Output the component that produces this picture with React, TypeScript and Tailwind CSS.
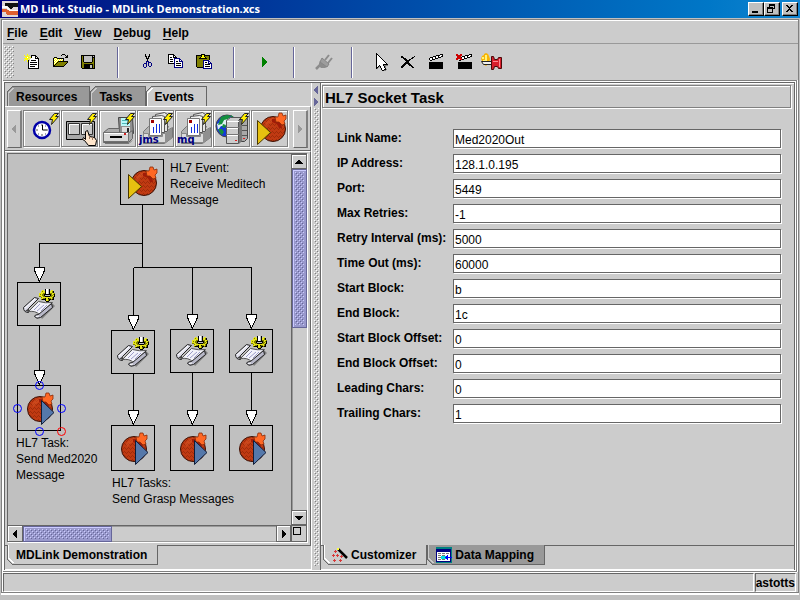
import React from "react";

const FONT = "font-['Liberation_Sans',Arial,sans-serif]";

/* ---------- pixel icons ---------- */

const PALETTE: Record<string, string> = {
  k: "#000000",
  w: "#ffffff",
  y: "#ffff00",
  o: "#808000",
  n: "#000080",
  r: "#cc0000",
  g: "#c0c0c0",
  d: "#808080",
  e: "#e6e61a",
};

function pixelCells(rows: string[]) {
  const cells: React.ReactNode[] = [];
  rows.forEach((row, y) => {
    let x = 0;
    while (x < row.length) {
      const ch = row[x];
      let end = x + 1;
      while (end < row.length && row[end] === ch) end++;
      if (PALETTE[ch]) {
        cells.push(<rect key={`${x}-${y}`} x={x} y={y} width={end - x} height={1} fill={PALETTE[ch]} />);
      }
      x = end;
    }
  });
  return cells;
}

function PixelIcon({ rows, size = 16 }: { rows: string[]; size?: number }) {
  return (
    <svg width={size} height={size} viewBox={`0 0 ${size} ${size}`} shapeRendering="crispEdges" aria-hidden="true">
      {pixelCells(rows)}
    </svg>
  );
}

const NEW_ROWS = [
  "...y............",
  "y..y.y.kkkkk....",
  ".yyyy..kwwwkk...",
  "..ywyyykwwwkwk..",
  "yyyyy..wwwwkkkk.",
  ".yyy.ywwwwwwwwk.",
  "y..yk.wkkkkkwwk.",
  "...ykwwwwwwwwwk.",
  "....kwkkkkkkkwk.",
  "....kwwwwwwwwwk.",
  "....kwkkkkkkkwk.",
  "....kwwwwwwwwwk.",
  "....kwkkkkkwwwk.",
  "....kwwwwwwwwwk.",
  "....kkkkkkkkkkk.",
];
const OPEN_ROWS = [
  "..........kkk...",
  ".........k...k.k",
  "..............kk",
  "..kkk........kkk",
  ".kywykkkkkkk....",
  ".kwywywywywk....",
  ".kywywywywyk....",
  ".kwywykkkkkkkkkk",
  ".kywykoooooooook",
  ".kwykoooooooook.",
  ".kykoooooooook..",
  ".kkoooooooook...",
  ".kkkkkkkkkkk....",
];
const SAVE_ROWS = [
  ".",
  ".kkkkkkkkkkkkkk.",
  ".kokggggggggkgk.",
  ".kokggggggggkkk.",
  ".kokggggggggkok.",
  ".kokggggggggkok.",
  ".kokggggggggkok.",
  ".kokggggggggkok.",
  ".kookkkkkkkkook.",
  ".kooooooooooook.",
  ".kookkkkkkkkkok.",
  ".kookkkkkkggkok.",
  ".kookkkkkkggkok.",
  ".kookkkkkkggkok.",
  "..kkkkkkkkkkkkk.",
];
const CUT_ROWS = [
  ".....k...k",
  ".....k...k",
  ".....kk.kk",
  "......k.k",
  "......kkk",
  ".......k",
  ".......k",
  "......nnn",
  "......n.nnn",
  "....nnn.n..n",
  "...n..n.n..n",
  "...n..n.n..n",
  "...n..n..nn",
  "....nn",
];
const COPY_ROWS = [
  "kkkkkk..........",
  "kwwwwkk.........",
  "kwwwwkwk........",
  "kwkkwkkkk.......",
  "kwwwwwnnnnnn....",
  "kwkkkwnwwwwnn...",
  "kwwwwwnwwwwnwn..",
  "kwkkkwnwkkwnnnn.",
  "kwwwwwnwwwwwwwn.",
  "kkkkkknwkkkkkwn.",
  "......nwwwwwwwn.",
  "......nwkkkkkwn.",
  "......nwwwwwwwn.",
  "......nnnnnnnnn.",
];
const PASTE_ROWS = [
  ".....kkkk.......",
  "kkkkkkyykkkkkk..",
  "kooookyykooook..",
  "koookyyyykoook..",
  "kookkkkkkkkook..",
  "kooooooooooook..",
  "koooooonnnnnn...",
  "koooooonwwwwnn..",
  "koooooonwkkwnwn.",
  "koooooonwwwwnnnn",
  "koooooonwkkkkkwn",
  "koooooonwwwwwwwn",
  "koooooonwkkkkkwn",
  ".kkkkkknwwwwwwwn",
  ".......nnnnnnnnn",
];
const CURSOR_ROWS = [
  "k",
  "kk",
  "kwk",
  "kwwk",
  "kwwwk",
  "kwwwwk",
  "kwwwwwk",
  "kwwwwwwk",
  "kwwwwwwwk",
  "kwwwwwwwwk",
  "kwwwwwwwwwk",
  "kwwwwwwkkkkk",
  "kwwkwwwkdddd",
  "kwkdkwwwkd",
  "kkd.kwwwkd",
  "kd...kwwwk",
  ".....kwwkkd",
  "......kkdd",
].map((r) => "....." + r);
const CROSS_ROWS = [
  "",
  "",
  ".kk...........k",
  ".kkk........kk",
  "...kkk.....kk",
  "....kkk..kk",
  ".....kkkkk",
  "......kkk",
  ".....kkkk",
  "....kkkkkk",
  "...kkk..kkk",
  "..kkk....kkk",
  ".kkk.......kk",
  ".kk.........kk",
];
const CLAP_ROWS = [
  "............kkk",
  "........kkkkwwk",
  ".....kkkwwkwwkk",
  "..kkkwwkwwkkk",
  ".kwwkwwkkk",
  ".kwwkkk",
  "..kk",
  "",
  ".kkkkkkkkkkkkkk",
  ".kkkkkkkkkkkkkk",
  ".kkkkkkkkkkkkkk",
  ".kkkkkkkkkkkkkk",
  ".kkkkkkkkkkkkkk",
  ".kkkkkkkkkkkkkk",
  ".kkkkkkkkkkkkkk",
];
const CLAP_X_ROWS = [
  "rr..rr.......kkk",
  "rrrrrr...kkkkwwk",
  ".rrrr.kkkwwkwwkk",
  ".rrrrkwwkwwkkk",
  "rrrrrrwwkkk",
  "rr..rrkk",
  "...kk",
  "",
  "..kkkkkkkkkkkkkk",
  "..kkkkkkkkkkkkkk",
  "..kkkkkkkkkkkkkk",
  "..kkkkkkkkkkkkkk",
  "..kkkkkkkkkkkkkk",
  "..kkkkkkkkkkkkkk",
  "..kkkkkkkkkkkkkk",
];
const GEAR_ROWS = [
  "......kwwgk.....",
  "...ee.kwwgk.ee..",
  "..eoeekwwgkeeok.",
  "..eeeekwwgkeeok.",
  "eeeeookwwgkooeeo",
  "eoeookkkkkkkoeok",
  "eeeook.....kooek",
  "ooeeookkkkkooeok",
  "..oeeeeeeeeeeok.",
  "..eeookeekooeok.",
  "..okkkkeeokkokk.",
  "......keeok.....",
  ".......kkk......",
];

function PlayIcon() {
  return (
    <svg width="16" height="16" viewBox="0 0 16 16" shapeRendering="crispEdges" aria-hidden="true">
      <path d="M6 3h1v1h1v1h1v1h1v1h1v2h-1v1h-1v1H8v1H7v1H6z" fill="#008000" />
    </svg>
  );
}

function PlugIcon() {
  return (
    <svg width="18" height="16" viewBox="0 0 18 16" aria-hidden="true">
      <path d="M1 15l4-4" stroke="#8c8c8c" strokeWidth="2.5" fill="none" />
      <path d="M5 7l7 6-2 1H6l-2-2V9z" fill="#8c8c8c" />
      <path d="M7 4l7 6-2 3-7-5z" fill="#9d9d9d" stroke="#858585" />
      <path d="M10 6l4-5M13 9l4-5" stroke="#8c8c8c" strokeWidth="2" fill="none" />
    </svg>
  );
}

function PinIcon() {
  return (
    <svg width="22" height="18" viewBox="0 0 22 18" className="shrink-0" aria-hidden="true">
      <path d="M3 1l2-1 2 1 1 2 1 3-1 4-3 3-3-2-1-3-1-2 1-3 2-1z" fill="#f9b400" />
      <path d="M4 2h2v5H4zM1 4h2v2H1zM2 7h4v2H2z" fill="#fff27a" />
      <path d="M.5 8.500h11v3h-9z" fill="#f0f0f0" stroke="#222" />
      <path d="M10.500 3.500h2l1 3h3l1-2h3v11h-3l-1-2h-3l-1 3h-2z" fill="#d81e2c" stroke="#4a0a0a" />
      <path d="M12 8.500h5M18.500 6v8" stroke="#ff8890" fill="none" />
    </svg>
  );
}

/* ---------- swing style textures ---------- */

function Bumps({ id, light, dark }: { id: string; light: string; dark: string }) {
  return (
    <svg className="block h-full w-full" shapeRendering="crispEdges" aria-hidden="true">
      <defs>
        <pattern id={id} width="4" height="4" patternUnits="userSpaceOnUse">
          <rect width="1" height="1" fill={light} />
          <rect x="1" y="1" width="1" height="1" fill={dark} />
          <rect x="2" y="2" width="1" height="1" fill={light} />
          <rect x="3" y="3" width="1" height="1" fill={dark} />
        </pattern>
      </defs>
      <rect width="100%" height="100%" fill={`url(#${id})`} />
    </svg>
  );
}

function Triangle({ dir, color = "#000" }: { dir: "up" | "down" | "left" | "right"; color?: string }) {
  const d = {
    up: "M3 2h2v1h1v1h1v1h1v1H0V5h1V4h1V3h1z",
    down: "M0 2h8v1H7v1H6v1H5v1H3V5H2V4H1V3H0z",
    left: "M6 0v8H5V7H4V6H3V5H2V3h1V2h1V1h1V0z",
    right: "M2 0h1v1h1v1h1v1h1v2H5v1H4v1H3v1H2z",
  }[dir];
  return (
    <svg width="8" height="8" viewBox="0 0 8 8" shapeRendering="crispEdges" aria-hidden="true">
      <path d={d} fill={color} />
    </svg>
  );
}

/* ---------- toolbar ---------- */

function ToolButton({ label, children }: { label: string; children: React.ReactNode }) {
  return (
    <button type="button" aria-label={label} className="flex h-7 w-7 items-center justify-center">
      {children}
    </button>
  );
}

function Separator({ tight = false }: { tight?: boolean }) {
  return (
    <div className={`flex h-[31px] justify-center ${tight ? "w-7" : "w-8"}`}>
      <div className="w-[2px] border-l border-[#666699] bg-white" />
    </div>
  );
}

/* ---------- tabs ---------- */

function Tab({
  children,
  active = false,
  bottom = false,
}: {
  children: React.ReactNode;
  active?: boolean;
  bottom?: boolean;
}) {
  const fill = active ? "bg-[#cccccc]" : "bg-[#999999]";
  const edge = bottom
    ? "border-b border-r border-[#666666] pr-[10px]"
    : "border-r border-t border-[#666666] pr-[12px]";
  const lit = active ? "#ffffff" : "#cccccc";
  return (
    <button
      type="button"
      role="tab"
      aria-selected={active}
      className={`relative flex h-5 items-center gap-[3px] pl-[9px] text-xs font-bold text-black ${fill} ${edge}`}
    >
      <svg
        className={`absolute left-0 ${bottom ? "bottom-[-1px] -scale-y-100" : "top-[-1px]"}`}
        width="7"
        height="20"
        viewBox="0 0 7 20"
        shapeRendering="crispEdges"
        aria-hidden="true"
      >
        <path d="M0 0h6L0 6z" fill="#cccccc" />
        <path d="M0 20V6l6-6" fill="none" stroke="#666666" />
        <path d="M1.500 20V7l5-5" fill="none" stroke={lit} />
      </svg>
      {children}
    </button>
  );
}

/* ---------- palette drawings ---------- */

function Bolt() {
  return <path d="M30.500 2.500h4l-3 3h3l-7 8 1-5h-3z" fill="#ffee00" stroke="#222" />;
}

function Ball({ kind }: { kind: "event" | "task" }) {
  const cx = kind === "event" ? 21 : 18;
  return (
    <g>
      <defs>
        <pattern id={`skin-${kind}`} width="4" height="4" patternUnits="userSpaceOnUse">
          <rect width="4" height="4" fill="#c03a12" />
          <path d="M0 0h1v1H0zM1 1h1v1H1zM2 2h1v1H2zM3 1h1v1H3z" fill="#a02c0a" />
        </pattern>
      </defs>
      <circle cx={cx} cy="18" r="12.500" fill={`url(#skin-${kind})`} stroke="#3c1004" />
      <path d={`M${cx - 8} 13l3-4 5-2 2 3-5 2-4 4z`} fill="#e0602c" opacity="0.400" />
      <path d={`M${cx - 1} 8l4 0 5 4 1 5-3 0-2-4-5-2z`} fill="#a01c08" />
      <path
        d={`M${cx + 2} 6l3 0 1-4 3 0 1 3 3-1 0 4-2 2 1 3-3 1-3-3-3 0z`}
        fill="#ff6824"
        stroke="#8c2c08"
        strokeWidth="0.800"
      />
      {kind === "event" ? (
        <path d="M5.500 9.500v24L18.500 21.500z" fill="#e6c010" stroke="#4a3800" />
      ) : (
        <path d="M19.500 9.500v24L32 21.500z" fill="#5578aa" stroke="#101c38" />
      )}
    </g>
  );
}

function ClockArt() {
  return (
    <g>
      <circle cx="18" cy="19" r="8" fill="#fff" stroke="#0000a8" strokeWidth="2.500" />
      <path d="M18 13v2M18 23v2M12 19h2M22 19h2M14 15h1M22 15h-1M14 23h1M22 23h-1" stroke="#555" />
      <path d="M18.500 14v5h4" stroke="#000" fill="none" />
      <Bolt />
    </g>
  );
}

function ScreenArt() {
  return (
    <g>
      <path d="M4.500 10.500h28v18h-28z" fill="#a8a8a8" stroke="#000" />
      <path d="M6.500 12.500h11v11h-11zM19.500 12.500h11v11h-11z" fill="#c8c8c8" stroke="#303030" />
      <path d="M7.500 23V13.500H17M20.500 23V13.500H30" stroke="#fff" fill="none" />
      <path
        d="M23.500 20.500l2-1 2 6 5 1 2 3-1 5h-7l-4-5-2-1 1-2 2 2z"
        fill="#ffe6cc"
        stroke="#000"
      />
      <path d="M27.500 25v3M30.500 26v3" stroke="#9a7860" />
      <Bolt />
    </g>
  );
}

function DriveArt() {
  return (
    <g>
      <path d="M18.500 6.500h14l1 16h-14z" fill="#909090" stroke="#444" />
      <path d="M21 7h9v8h-9z" fill="#b8f8f8" />
      <path d="M22 9.500h7M22 12.500h7" stroke="#50b8b8" />
      <path d="M22 16h8v6h-8z" fill="#ddd" />
      <path d="M27 17h2v4h-2z" fill="#222" />
      <path d="M3.500 21.500l5-4h11v4h10l3-2v8l-4 4h-25z" fill="#aaa" stroke="#666" />
      <path d="M3.500 21.500h25v9h-25z" fill="#d8d8d8" stroke="#707070" />
      <path d="M4 22.500h24" stroke="#fff" />
      <path d="M10 25h12v2H10z" fill="#000" />
      <path d="M24 22h2v2h-2z" fill="#d02020" />
      <path d="M5 32.500h24l3-3" stroke="#777" fill="none" />
      <Bolt />
    </g>
  );
}

function MailArt({ text }: { text: string }) {
  return (
    <g>
      <path d="M5.500 20.500l5-5h20l-3 5 7-4v10l-8 6h-21z" fill="#b4b4b4" stroke="#777" />
      <path d="M17.500 3.500l9-2 3 2v17h-12z" fill="#e4e4e4" stroke="#555" />
      <path d="M14.500 5.500l9-1 3 1v16h-12z" fill="#f0f0f0" stroke="#555" />
      <path d="M11.500 7.500h12v17h-12z" fill="#fff" stroke="#777" />
      <path d="M13 9h3v3h-3z" fill="#a00000" />
      <path d="M15.500 16v6M18.500 13v9M21.500 13v9" stroke="#1030e0" />
      <path d="M5.500 22.500h5v3h14v-3h3v9h-22z" fill="#dcdcdc" stroke="#888" />
      <path d="M27 22l7-5v10l-7 5z" fill="#909090" />
      <text x="1" y="32" fontSize="10" fontWeight="bold" fill="#000080" fontFamily="DejaVu Sans, sans-serif">
        {text}
      </text>
      <Bolt />
    </g>
  );
}

function ServerArt() {
  return (
    <g>
      <circle cx="13" cy="15" r="11" fill="#1438d8" stroke="#444" />
      <path d="M3 13l6-3 2-4 5 1 1 8H7l-3 4z" fill="#e0f0f4" />
      <path d="M7 6l6-2 4 1-3 3-4 1-2 4-4 1zM17 4l5 4v5l-4-3zM4 18l4 0 2 3-2 3-2-2zM9 13l3 1-1 3-3-1z" fill="#14903c" />
      <path d="M24.500 10.500l3-3h6v20l-3 3h-6z" fill="#a8a8a8" stroke="#444" />
      <path d="M25 14.500h8M25 19.500h8M25 24.500h8" stroke="#555" />
      <path d="M12.500 9.500l4-3h11l-3 3v23h-12z" fill="#ccc" stroke="#555" />
      <path d="M25 9l3-3v24l-3 3z" fill="#777" />
      <path d="M12 16.500h13M12 23.500h13" stroke="#777" />
      <path d="M13 10.500h12M13 17.500h11M13 24.500h11" stroke="#fff" />
      <path d="M21 29h2v1h-2zM29 27h2v1h-2z" fill="#e02020" />
      <Bolt />
    </g>
  );
}

function PaletteButton({ label, children }: { label: string; children: React.ReactNode }) {
  return (
    <button
      type="button"
      aria-label={label}
      className="h-[37px] w-[37px] shrink-0 border border-[#808080] shadow-[1px_1px_0_#ffffff,inset_1px_1px_0_#ffffff]"
    >
      <svg width="35" height="35" viewBox="0 0 35 35" aria-hidden="true">
        {children}
      </svg>
    </button>
  );
}

/* ---------- diagram ---------- */

function Script({ x, y }: { x: number; y: number }) {
  return (
    <g transform={`translate(${x} ${y})`}>
      <rect x="0.500" y="0.500" width="43" height="43" fill="#c0c0c0" stroke="#000" />
      <g shapeRendering="auto">
        <path d="M11 31l9-2 5 8 13-13-3-3-14 8z" fill="#808080" />
        <path d="M6.500 25.500l11-10 4 1-10 10v4q-5 0-5-5z" fill="#e0e0ec" stroke="#222" />
        <path d="M8 26l10-9" stroke="#fff" />
        <path d="M8 29l4-3v4z" fill="#444" />
        <path d="M11.500 29.500l10-10q7 2 14 1l-13 12q-4-4-11-3z" fill="#f2f2fa" stroke="#555" />
        <path d="M34.500 21.500l1 4-12 10q-4 2-6-1 0-2 4-2z" fill="#b8b8c8" stroke="#222" />
        <path d="M17 28l6-6M20 29l7-6M24 29l6-6" stroke="#9c9cc8" />
        <path d="M19 34.500l3-.5" stroke="#fff" />
      </g>
      <g transform="translate(22 7)">{pixelCells(GEAR_ROWS)}</g>
    </g>
  );
}

function BallNode({ x, y, kind }: { x: number; y: number; kind: "event" | "task" }) {
  return (
    <g transform={`translate(${x} ${y})`}>
      <rect x="0.500" y="0.500" width="43" height="45" fill="#c0c0c0" stroke="#000" />
      <g shapeRendering="auto" transform={kind === "event" ? "translate(3 6)" : "translate(5 6)"}>
        <Ball kind={kind} />
      </g>
    </g>
  );
}

function Arrow({ x, y }: { x: number; y: number }) {
  return <path d={`M${x - 5} ${y - 14}h10v3l-5 11-5-11z`} transform="translate(0.500 0.500)" fill="#fff" stroke="#000" />;
}

function Diagram() {
  const label = "absolute whitespace-pre text-xs leading-4 text-black";
  return (
    <div className="relative min-h-0 min-w-0 overflow-hidden bg-[#c0c0c0]">
      <svg className="absolute left-0 top-0" width="283" height="371" shapeRendering="crispEdges" aria-hidden="true">
        <g fill="none" stroke="#000" transform="translate(0.500 0.500)">
          <path d="M134 50v63M134 89H31v24M31 171v60M125 113h118M125 113v62M184 113v62M243 113v62" />
          <path d="M125 219v52M184 218v53M243 218v53" />
        </g>
        <BallNode x={112} y={5} kind="event" />
        <Script x={9} y={128} />
        <Script x={103} y={176} />
        <Script x={162} y={175} />
        <Script x={221} y={175} />
        <BallNode x={9} y={231} kind="task" />
        <BallNode x={103} y={271} kind="task" />
        <BallNode x={162} y={271} kind="task" />
        <BallNode x={221} y={271} kind="task" />
        <Arrow x={31} y={127} />
        <Arrow x={31} y={230} />
        <Arrow x={125} y={175} />
        <Arrow x={184} y={174} />
        <Arrow x={243} y={174} />
        <Arrow x={125} y={270} />
        <Arrow x={184} y={270} />
        <Arrow x={243} y={270} />
        <g fill="none" stroke="#0000ff" shapeRendering="auto">
          <circle cx="31.500" cy="231.500" r="4" />
          <circle cx="9.500" cy="254.500" r="4" />
          <circle cx="53.500" cy="254.500" r="4" />
          <circle cx="31.500" cy="277.500" r="4" />
          <circle cx="53.500" cy="277.500" r="4" stroke="#ff0000" />
        </g>
      </svg>
      <p className={`${label} left-[162px] top-[6px]`}>{"HL7 Event:\nReceive Meditech\nMessage"}</p>
      <p className={`${label} left-[8px] top-[281px]`}>{"HL7 Task:\nSend Med2020\nMessage"}</p>
      <p className={`${label} left-[104px] top-[321px]`}>{"HL7 Tasks:\nSend Grasp Messages"}</p>
    </div>
  );
}

const SCROLL_BTN =
  "flex shrink-0 items-center justify-center bg-[#cccccc] border border-[#666666] shadow-[inset_1px_1px_0_#ffffff]";

function CanvasArea() {
  return (
    <div className="mb-[3px] ml-px mr-[3px] mt-px grid min-h-0 flex-1 grid-cols-[1fr_16px] grid-rows-[1fr_17px] border-l border-t border-[#666666] shadow-[1px_1px_0_#ffffff]">
      <Diagram />
      <div className="flex min-h-0 flex-col border-l border-[#666666]">
        <button type="button" aria-label="Scroll up" className={`${SCROLL_BTN} h-[15px] border-l-0`}>
          <Triangle dir="up" />
        </button>
        <div className="h-[159px] shrink-0 border border-[#666699] bg-[#9999cc] p-[2px] shadow-[inset_1px_1px_0_#ccccff]">
          <Bumps id="bumps-v" light="#ccccff" dark="#666699" />
        </div>
        <div className="min-h-0 flex-1 border-l border-[#999999]" />
        <button type="button" aria-label="Scroll down" className={`${SCROLL_BTN} h-[15px] border-l-0`}>
          <Triangle dir="down" />
        </button>
      </div>
      <div className="flex border-t border-[#666666]">
        <button type="button" aria-label="Scroll left" className={`${SCROLL_BTN} w-[15px] border-l-0 border-t-0`}>
          <Triangle dir="left" />
        </button>
        <div className="w-[89px] shrink-0 border border-[#666699] bg-[#9999cc] p-[2px] shadow-[inset_1px_1px_0_#ccccff]">
          <Bumps id="bumps-h" light="#ccccff" dark="#666699" />
        </div>
        <div className="flex-1 border-b border-t border-[#999999]" />
        <button type="button" aria-label="Scroll right" className={`${SCROLL_BTN} w-[15px] border-t-0`}>
          <Triangle dir="right" />
        </button>
      </div>
      <div className="flex items-start justify-start border border-[#666666] pl-px pt-px">
        <div className="h-2 w-2 border border-black" />
      </div>
    </div>
  );
}

function LeftPane() {
  return (
    <section className="flex w-[307px] shrink-0 flex-col border-l border-[#666666] pt-[3px]">
      <div role="tablist" className="flex pl-[2px]">
        <Tab>Resources</Tab>
        <Tab>Tasks</Tab>
        <Tab active>Events</Tab>
      </div>
      <div className="flex h-[45px] shrink-0 items-center border-b border-r border-b-[#666666] border-r-[#666666] border-t border-t-white pl-[2px] pr-[2px]">
        <button
          type="button"
          aria-label="Previous items"
          className="mr-px flex h-[38px] w-[15px] items-center justify-center border-b border-l border-r-2 border-t border-b-[#666666] border-l-white border-r-[#808080] border-t-white"
        >
          <Triangle dir="left" color="#999999" />
        </button>
        <div className="flex flex-1 gap-px">
          <PaletteButton label="Timer event">
            <ClockArt />
          </PaletteButton>
          <PaletteButton label="Screen event">
            <ScreenArt />
          </PaletteButton>
          <PaletteButton label="File event">
            <DriveArt />
          </PaletteButton>
          <PaletteButton label="JMS event">
            <MailArt text="jms" />
          </PaletteButton>
          <PaletteButton label="MQ event">
            <MailArt text="mq" />
          </PaletteButton>
          <PaletteButton label="Server event">
            <ServerArt />
          </PaletteButton>
          <PaletteButton label="HL7 event">
            <Ball kind="event" />
          </PaletteButton>
        </div>
        <button
          type="button"
          aria-label="More items"
          className="flex h-[38px] w-[15px] items-center justify-center border-b border-l border-r-2 border-t border-b-[#666666] border-l-white border-r-[#808080] border-t-white"
        >
          <Triangle dir="right" color="#999999" />
        </button>
      </div>
      <div className="flex min-h-0 flex-1 flex-col border-r border-t border-r-[#666666] border-t-white pl-px">
        <CanvasArea />
      </div>
      <div className="h-[25px] shrink-0 border-b border-t border-b-white border-t-[#666666]">
        <div role="tablist" className="-mt-px flex pl-[2px]">
          <Tab active bottom>
            MDLink Demonstration
          </Tab>
        </div>
      </div>
    </section>
  );
}

function Divider() {
  return (
    <div className="flex w-[9px] shrink-0 flex-col items-center border-l border-white pb-1 pt-[3px]">
      <button type="button" aria-label="Collapse left" className="mb-1">
        <Triangle dir="left" color="#666699" />
      </button>
      <button type="button" aria-label="Collapse right" className="mb-[2px]">
        <Triangle dir="right" color="#666699" />
      </button>
      <div className="min-h-0 w-[5px] flex-1">
        <Bumps id="bumps-d" light="#ffffff" dark="#808080" />
      </div>
    </div>
  );
}

/* ---------- property form ---------- */

const FIELDS: [string, string][] = [
  ["Link Name:", "Med2020Out"],
  ["IP Address:", "128.1.0.195"],
  ["Port:", "5449"],
  ["Max Retries:", "-1"],
  ["Retry Interval (ms):", "5000"],
  ["Time Out (ms):", "60000"],
  ["Start Block:", "b"],
  ["End Block:", "1c"],
  ["Start Block Offset:", "0"],
  ["End Block Offset:", "0"],
  ["Leading Chars:", "0"],
  ["Trailing Chars:", "1"],
];

function WandIcon() {
  return (
    <svg width="16" height="16" viewBox="0 0 16 16" aria-hidden="true">
      <path d="M6 2l9 9" stroke="#000" strokeWidth="2.500" />
      <path d="M5 1h2v2H5z" fill="#ffff40" />
      <path
        d="M3.500 3v3M2 4.500h3M5.500 7v3M4 8.500h3M1.500 7v3M0 8.500h3M2.500 12v3M1 13.500h3M8.500 12v3M7 13.500h3M9.500 8v3M8 9.500h3"
        stroke="#d83838"
      />
    </svg>
  );
}

function MappingIcon() {
  return (
    <svg width="16" height="16" viewBox="0 0 16 16" shapeRendering="crispEdges" aria-hidden="true">
      <path d="M0 0h16v16H0z" fill="#008080" />
      <path d="M0 2h15v13H0z" fill="#000080" />
      <path d="M1 5h13v9H1z" fill="#fff" />
      <path d="M2 6h3v1H2zM6 6h3v1H6zM10 6h3v1h-3zM2 8h3v1H2zM6 8h3v1H6zM2 10h3v1H2zM2 12h3v1H2zM6 12h3v1H6z" fill="#777" />
      <path d="M5 9h5v3H5z" fill="#00e0e0" />
      <path d="M9 10h7v1H9zM10 9h2v3h-2zM11 8h1v5h-1z" fill="#0000ff" />
    </svg>
  );
}

function RightPane() {
  return (
    <section className="flex min-w-0 flex-1 flex-col border-l border-r border-[#666666]">
      <div className="flex min-h-0 flex-1 flex-col border-l border-t border-white">
        <h1 className="mb-px mr-[3px] mt-px h-[23px] shrink-0 border border-[#808080] pl-[2px] text-[15px] font-bold leading-[23px] text-black shadow-[1px_1px_0_#ffffff,inset_1px_1px_0_#ffffff]">
          HL7 Socket Task
        </h1>
        <form className="flex flex-col gap-[6px] pl-[15px] pr-[13px] pt-5">
          {FIELDS.map(([name, value], i) => (
            <div key={name} className="flex h-[19px] items-center">
              <label htmlFor={`field-${i}`} className="w-[116px] shrink-0 pb-px text-xs font-bold text-black">
                {name}
              </label>
              <input
                id={`field-${i}`}
                type="text"
                defaultValue={value}
                className="h-[19px] min-w-0 flex-1 border border-[#666666] bg-white pl-px pt-[3px] text-xs leading-4 text-black shadow-[1px_1px_0_#ffffff] outline-none"
              />
            </div>
          ))}
        </form>
      </div>
      <div className="h-[25px] shrink-0 border-b border-t border-b-white border-t-[#666666]">
        <div role="tablist" className="-mt-px flex pl-[2px]">
          <Tab active bottom>
            <WandIcon />
            Customizer
          </Tab>
          <Tab bottom>
            <MappingIcon />
            Data Mapping
          </Tab>
        </div>
      </div>
    </section>
  );
}

/* ---------- window chrome ---------- */

function CaptionButton({ label, children }: { label: string; children: React.ReactNode }) {
  return (
    <button
      type="button"
      aria-label={label}
      className="h-[14px] w-4 border border-b-black border-l-white border-r-black border-t-white bg-[#c0c0c0] shadow-[inset_-1px_-1px_0_#808080]"
    >
      <svg width="14" height="12" viewBox="0 0 14 12" shapeRendering="crispEdges" aria-hidden="true">
        {children}
      </svg>
    </button>
  );
}

function TitleBar() {
  return (
    <header className="flex h-[18px] shrink-0 items-center bg-gradient-to-r from-[#000080] to-[#1084d0] pl-[2px] pr-[2px]">
      <svg width="16" height="16" viewBox="0 0 16 16" shapeRendering="crispEdges" aria-hidden="true">
        <path d="M0 0h16v16H0z" fill="#e0d8d8" />
        <path d="M3 2h13v4h-5l-1 2H8L6 5H3z" fill="#101010" />
        <path d="M0 5h5l3 4h8v1H7L4 7H0z" fill="#fff" />
        <path d="M0 8h4l4 2h8v4H5l-1-3H0z" fill="#e06030" />
      </svg>
      <span className="flex-1 whitespace-nowrap pl-[2px] font-['Noto_Sans',sans-serif] text-[11px] font-bold leading-[18px] text-white">
        MD Link Studio - MDLink Demonstration.xcs
      </span>
      <CaptionButton label="Minimize">
        <path d="M3 8h6v2H3z" fill="#000" />
      </CaptionButton>
      <CaptionButton label="Restore">
        <path d="M4 1h6v5H8V5h1V3H5v1H4zM2 4h6v6H2zM3 6v3h4V6z" fill="#000" fillRule="evenodd" />
      </CaptionButton>
      <span className="w-[2px]" />
      <CaptionButton label="Close">
        <path
          d="M3 2h2v1h1v1h1V3h1V2h2v1H9v1H8v1H7v1h1v1h1v1h1v1H8V8H7V7H6v1H5v1H3V8h1V7h1V6h1V5H5V4H4V3H3z"
          fill="#000"
        />
      </CaptionButton>
    </header>
  );
}

function MenuBar() {
  return (
    <nav className="flex h-[22px] shrink-0 items-center gap-[12px] pl-[4px] pt-px text-xs font-bold text-black">
      {["File", "Edit", "View", "Debug", "Help"].map((item) => (
        <button key={item} type="button" className="font-bold">
          <span className="underline underline-offset-2">{item[0]}</span>
          {item.slice(1)}
        </button>
      ))}
    </nav>
  );
}

function ToolBar() {
  return (
    <div className="flex h-[37px] shrink-0 items-center border-t border-[#999999] pl-px">
      <div className="mr-[4px] h-8 w-[10px]">
        <Bumps id="bumps-t" light="#ffffff" dark="#808080" />
      </div>
      <ToolButton label="New">
        <PixelIcon rows={NEW_ROWS} />
      </ToolButton>
      <ToolButton label="Open">
        <PixelIcon rows={OPEN_ROWS} />
      </ToolButton>
      <ToolButton label="Save">
        <PixelIcon rows={SAVE_ROWS} />
      </ToolButton>
      <Separator />
      <ToolButton label="Cut">
        <PixelIcon rows={CUT_ROWS} />
      </ToolButton>
      <ToolButton label="Copy">
        <PixelIcon rows={COPY_ROWS} />
      </ToolButton>
      <ToolButton label="Paste">
        <PixelIcon rows={PASTE_ROWS} />
      </ToolButton>
      <Separator />
      <ToolButton label="Run">
        <PlayIcon />
      </ToolButton>
      <Separator />
      <ToolButton label="Connect">
        <PlugIcon />
      </ToolButton>
      <Separator tight />
      <ToolButton label="Select">
        <PixelIcon rows={CURSOR_ROWS} size={18} />
      </ToolButton>
      <ToolButton label="Delete">
        <PixelIcon rows={CROSS_ROWS} />
      </ToolButton>
      <ToolButton label="Record">
        <PixelIcon rows={CLAP_ROWS} />
      </ToolButton>
      <ToolButton label="Stop recording">
        <PixelIcon rows={CLAP_X_ROWS} />
      </ToolButton>
      <ToolButton label="Pin">
        <PinIcon />
      </ToolButton>
    </div>
  );
}

export default function App() {
  return (
    <div className={`flex h-screen w-full flex-col overflow-hidden bg-[#c0c0c0] ${FONT}`}>
      <TitleBar />
      <div className="mb-[7px] ml-px mr-px mt-px flex min-h-0 flex-1 flex-col border border-[#808080] bg-[#cccccc] shadow-[0_2px_0_#ffffff]">
        <div className="flex min-h-0 flex-1 flex-col border-l border-t border-white">
          <MenuBar />
          <ToolBar />
          <main className="mr-px flex min-h-0 flex-1 border-b border-r border-t border-[#808080] shadow-[0_1px_0_#ffffff,1px_0_0_#ffffff]">
            <div className="flex min-h-0 min-w-0 flex-1 border-b border-l border-r border-t border-white">
              <div className="flex min-h-0 min-w-0 flex-1 border-t border-[#666666]">
                <LeftPane />
                <Divider />
                <RightPane />
              </div>
            </div>
          </main>
          <footer className="mr-[2px] mt-px flex h-[19px] shrink-0 text-xs font-bold text-black">
            <div className="flex-1 border border-b-white border-l-[#666666] border-r-white border-t-[#666666]" />
            <div className="ml-px border border-b-white border-l-[#666666] border-r-white border-t-[#666666] leading-[18px]">
              astotts
            </div>
          </footer>
        </div>
      </div>
    </div>
  );
}
